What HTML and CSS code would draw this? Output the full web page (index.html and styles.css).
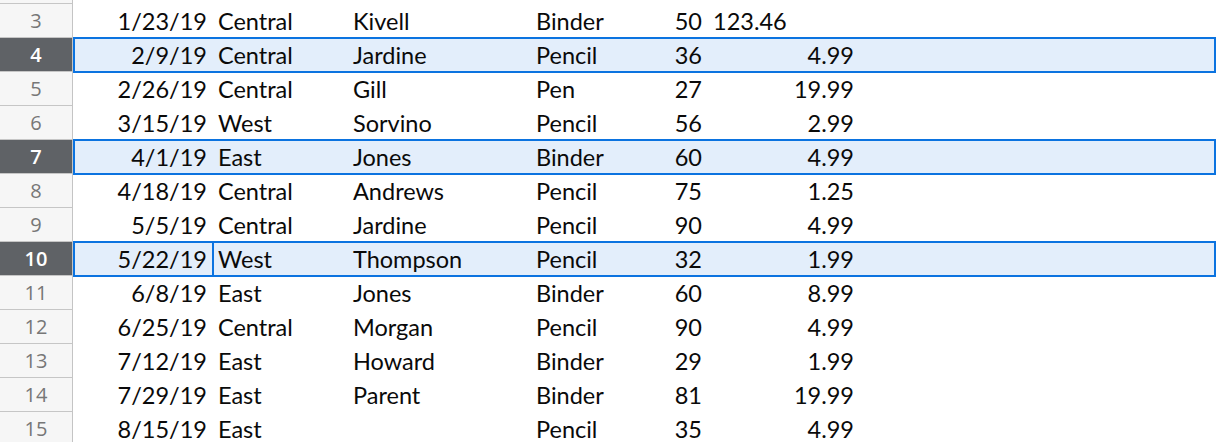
FILE: index.html
```html
<!DOCTYPE html>
<html>
<head>
<meta charset="utf-8">
<link rel="stylesheet" href="styles.css">
</head>
<body>
<div class="sheet">
  <div class="row stub"><div class="rh"></div></div>
  <div class="row"><div class="rh">3</div><div class="c r">1/23/19</div><div class="c">Central</div><div class="c">Kivell</div><div class="c">Binder</div><div class="c r">50</div><div class="c">123.46</div><div></div></div>
  <div class="row sel"><div class="rh">4</div><div class="c r">2/9/19</div><div class="c">Central</div><div class="c">Jardine</div><div class="c">Pencil</div><div class="c r">36</div><div class="c r">4.99</div><div></div></div>
  <div class="row"><div class="rh">5</div><div class="c r">2/26/19</div><div class="c">Central</div><div class="c">Gill</div><div class="c">Pen</div><div class="c r">27</div><div class="c r">19.99</div><div></div></div>
  <div class="row"><div class="rh">6</div><div class="c r">3/15/19</div><div class="c">West</div><div class="c">Sorvino</div><div class="c">Pencil</div><div class="c r">56</div><div class="c r">2.99</div><div></div></div>
  <div class="row sel"><div class="rh">7</div><div class="c r">4/1/19</div><div class="c">East</div><div class="c">Jones</div><div class="c">Binder</div><div class="c r">60</div><div class="c r">4.99</div><div></div></div>
  <div class="row"><div class="rh">8</div><div class="c r">4/18/19</div><div class="c">Central</div><div class="c">Andrews</div><div class="c">Pencil</div><div class="c r">75</div><div class="c r">1.25</div><div></div></div>
  <div class="row"><div class="rh">9</div><div class="c r">5/5/19</div><div class="c">Central</div><div class="c">Jardine</div><div class="c">Pencil</div><div class="c r">90</div><div class="c r">4.99</div><div></div></div>
  <div class="row sel"><div class="rh">10</div><div class="c r active">5/22/19</div><div class="c">West</div><div class="c">Thompson</div><div class="c">Pencil</div><div class="c r">32</div><div class="c r">1.99</div><div></div></div>
  <div class="row"><div class="rh">11</div><div class="c r">6/8/19</div><div class="c">East</div><div class="c">Jones</div><div class="c">Binder</div><div class="c r">60</div><div class="c r">8.99</div><div></div></div>
  <div class="row"><div class="rh">12</div><div class="c r">6/25/19</div><div class="c">Central</div><div class="c">Morgan</div><div class="c">Pencil</div><div class="c r">90</div><div class="c r">4.99</div><div></div></div>
  <div class="row"><div class="rh">13</div><div class="c r">7/12/19</div><div class="c">East</div><div class="c">Howard</div><div class="c">Binder</div><div class="c r">29</div><div class="c r">1.99</div><div></div></div>
  <div class="row"><div class="rh">14</div><div class="c r">7/29/19</div><div class="c">East</div><div class="c">Parent</div><div class="c">Binder</div><div class="c r">81</div><div class="c r">19.99</div><div></div></div>
  <div class="row"><div class="rh">15</div><div class="c r">8/15/19</div><div class="c">East</div><div class="c"></div><div class="c">Pencil</div><div class="c r">35</div><div class="c r">4.99</div><div></div></div>
</div>
</body>
</html>
```

FILE: styles.css
```css
html, body {
  margin: 0;
  padding: 0;
  background: #ffffff;
  overflow: hidden;
}

.sheet {
  width: 1216px;
  height: 442px;
  overflow: hidden;
  font-family: "Lato", "Liberation Sans", sans-serif;
  font-size: 23.5px;
  color: #0a0a0a;
}

.row {
  position: relative;
  display: grid;
  grid-template-columns: 73px 140px 135px 183px 141px 36px 152px 1fr;
  height: 34px;
}

.row.stub {
  height: 4px;
}

.rh {
  box-sizing: border-box;
  background: #f6f6f6;
  border-right: 1px solid #c4c4c4;
  border-bottom: 1px solid #c6c6c6;
  display: flex;
  align-items: center;
  justify-content: center;
  font-family: "Open Sans", "Liberation Sans", sans-serif;
  font-size: 20px;
  color: #777777;
}

.c {
  display: flex;
  align-items: center;
  padding: 0 5px;
  white-space: nowrap;
  overflow: hidden;
  position: relative;
  z-index: 1;
}

.c.r {
  justify-content: flex-end;
  padding-right: 6px;
}

.row.sel {
  background: linear-gradient(to right, transparent 73px, #e3eefb 73px);
}

.row.sel .rh {
  background: #5f6266;
  color: #ffffff;
  font-weight: 600;
}

.row.sel::after {
  content: "";
  position: absolute;
  z-index: 3;
  left: 73px;
  right: 0;
  top: -1px;
  bottom: -1px;
  border: 2px solid #0b73e0;
  pointer-events: none;
}

.c.active {
  overflow: visible;
  z-index: 4;
}

.c.active::after {
  content: "";
  position: absolute;
  left: 0;
  right: -1px;
  top: -1px;
  bottom: -1px;
  border: 2px solid #0b73e0;
}
```
